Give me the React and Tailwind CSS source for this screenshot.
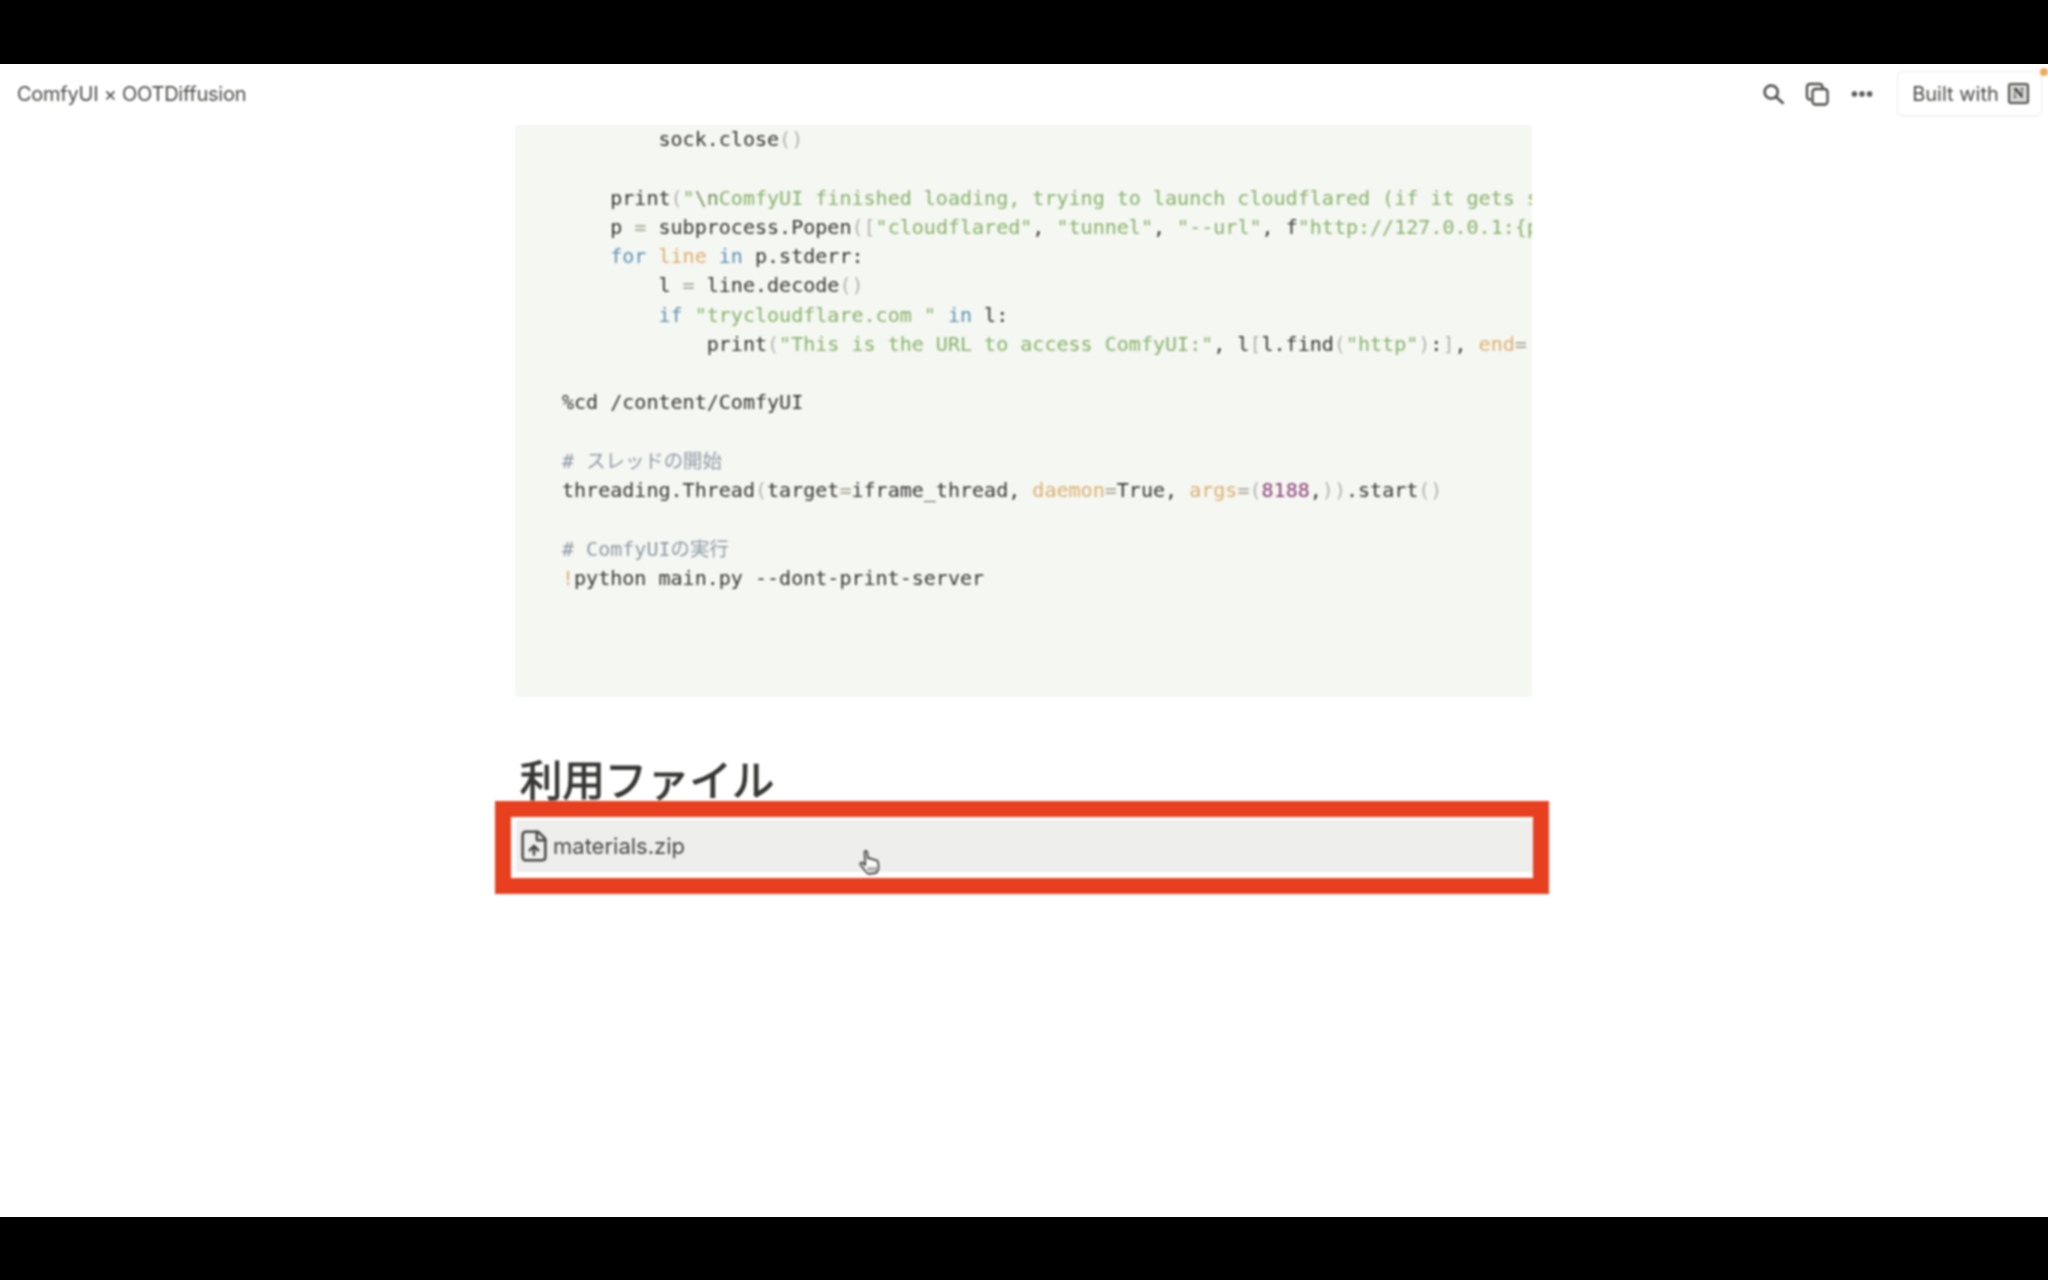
import React from "react";
import { MoreHorizontal, FileUp } from "lucide-react";

const T = ({ c, children }) => <span className={c}>{children}</span>;
const G = "text-[#86b36a]";
const B = "text-[#5c93b5]";
const O = "text-[#dcb06e]";
const P = "text-[#b4b4af]";
const E = "text-[#a8a596]";
const C = "text-[#8f99a5]";
const M = "text-[#8c3f78]";

const Line = ({ children }) => <div className="h-[29.25px] leading-[29.25px] whitespace-pre">{children || " "}</div>;

function Hand() {
  return (
    <svg width="24" height="28" viewBox="0 0 24 28" fill="none">
      <path
        d="M6.5 3.2c0-1.6 2.5-1.6 2.7 0l.8 6.3 1.2-.3c1-.2 1.8.2 2 1l1.3-.1c1-.1 1.6.4 1.8 1l1.3 0c1.5.2 2.4 1.3 2.6 2.8l.3 4.1c.2 2.8-1 4.6-2.5 6l-7.5 1c-1.6-.9-2.7-2.2-3.7-3.9l-4.3-5.4c-1-1.4.6-2.7 2-1.9l2.8 2.2z"
        fill="#fafafa"
        stroke="#4a4a4a"
        strokeWidth="1.8"
        strokeLinejoin="round"
      />
      <path d="M11 18v4M14 18v4M17 18v4" stroke="#4a4a4a" strokeWidth="1.2" />
    </svg>
  );
}

function SearchIcon() {
  return (
    <svg width="24" height="24" viewBox="0 0 24 24" fill="none" stroke="currentColor" strokeWidth="2.5" strokeLinecap="round" className="mr-[19px]">
      <circle cx="9.2" cy="10" r="6.6" />
      <path d="M14.2 15l6.6 6" />
    </svg>
  );
}

function CopyIcon() {
  return (
    <svg width="24" height="24" viewBox="0 0 24 24" fill="none" stroke="currentColor" strokeWidth="2.3" className="mr-[20px]">
      <path d="M6 17.5H5a3 3 0 0 1-3-3V5a3 3 0 0 1 3-3h9.5a3 3 0 0 1 3 3v1" />
      <rect x="7.5" y="7" width="15" height="15.5" rx="3" />
    </svg>
  );
}

function Notion() {
  return (
    <div className="w-[21px] h-[21px] rounded-[3px] border-[2.5px] border-[#4a4a48] bg-[#d8d8d6] flex items-center justify-center text-[15px] leading-none font-bold text-[#333331] font-['Liberation_Serif',serif]">
      N
    </div>
  );
}

export default function App() {
  return (
    <div className="w-[2048px] h-[1280px] flex flex-col overflow-hidden bg-white font-['Inter','Noto_Sans_CJK_JP',sans-serif]">
      <div className="h-[64px] bg-black shrink-0" />

      <header className="relative h-[61px] shrink-0 flex items-center justify-between pl-[17px] pr-[6px] pb-[2px] text-[#4a4a48] blur-[0.8px]">
        <div className="text-[20px] leading-none tracking-[-0.25px]">ComfyUI × OOTDiffusion</div>
        <div className="flex items-center">
          <SearchIcon />
          <CopyIcon />
          <MoreHorizontal size={26} strokeWidth={3} className="mr-[22px]" />
          <div className="h-[45px] w-[145px] flex items-center justify-center gap-[9px] pl-[2px] rounded-[6px] border border-[#ebebe9] text-[20px] shadow-[0_1px_2px_rgba(0,0,0,0.04)]">
            <span>Built with</span>
            <Notion />
          </div>
        </div>
        <div className="absolute right-0 top-[4px] w-[8px] h-[8px] rounded-full bg-[#eeaa55]" />
      </header>

      <main className="flex-1 overflow-hidden pl-[515px] blur-[0.8px]">
        <div className="w-[1017px] h-[572px] bg-[#f5f7f2] overflow-hidden rounded-[2px] pl-[47px] text-[20.04px] text-[#363635] font-['DejaVu_Sans_Mono','Noto_Sans_CJK_JP',monospace]">
          <Line>{"        sock.close"}<T c={P}>()</T></Line>
          <Line />
          <Line>{"    print"}<T c={P}>(</T><T c={G}>"</T><T c="text-[#6f8f5a]">\n</T><T c={G}>ComfyUI finished loading, trying to launch cloudflared (if it gets stuck here cloudflared is having issues)</T></Line>
          <Line>{"    p "}<T c={E}>=</T>{" subprocess.Popen"}<T c={P}>(</T><T c={P}>[</T><T c={G}>"cloudflared"</T>{", "}<T c={G}>"tunnel"</T>{", "}<T c={G}>"--url"</T>{", f"}<T c={G}>"http://127.0.0.1:{"{"}port{"}"}"</T></Line>
          <Line>{"    "}<T c={B}>for</T>{" "}<T c={O}>line</T>{" "}<T c={B}>in</T>{" p.stderr:"}</Line>
          <Line>{"        l "}<T c={E}>=</T>{" line.decode"}<T c={P}>()</T></Line>
          <Line>{"        "}<T c={B}>if</T>{" "}<T c={G}>"trycloudflare.com "</T>{" "}<T c={B}>in</T>{" l:"}</Line>
          <Line>{"            print"}<T c={P}>(</T><T c={G}>"This is the URL to access ComfyUI:"</T>{", l"}<T c={P}>[</T>{"l.find"}<T c={P}>(</T><T c={G}>"http"</T><T c={P}>)</T>{":"}<T c={P}>]</T>{", "}<T c={O}>end</T><T c={E}>=</T></Line>
          <Line />
          <Line>%cd /content/ComfyUI</Line>
          <Line />
          <Line><T c={C}># <span className="text-[19.4px]">スレッドの開始</span></T></Line>
          <Line>{"threading.Thread"}<T c={P}>(</T>{"target"}<T c={E}>=</T>{"iframe_thread, "}<T c={O}>daemon</T><T c={E}>=</T>{"True, "}<T c={O}>args</T><T c={E}>=</T><T c={P}>(</T><T c={M}>8188</T>{","}<T c={P}>))</T>{".start"}<T c={P}>()</T></Line>
          <Line />
          <Line><T c={C}># ComfyUI<span className="text-[19.4px]">の実行</span></T></Line>
          <Line><T c={O}>!</T>python main.py --dont-print-server</Line>
        </div>

        <h2 className="mt-[61px] ml-[5px] h-[46px] leading-[46px] text-[42.4px] font-normal [-webkit-text-stroke:1.1px_#363634] text-[#363634] whitespace-nowrap">利用ファイル</h2>

        <div className="relative -mt-[3px] -ml-[20px] w-[1054px] h-[93px] border-[16px] border-[#e8401f] bg-white pt-[3px] pb-[6px] pl-[5px]">
          <div className="h-[52px] bg-[#eeeeed] flex items-center pl-[1px] text-[#484846]">
            <FileUp size={34} strokeWidth={1.8} className="mr-[2px]" />
            <span className="text-[22px] leading-none">materials.zip</span>
          </div>
          <div className="absolute left-[347px] top-[32px]">
            <Hand />
          </div>
        </div>
      </main>

      <div className="h-[63px] bg-black shrink-0" />
    </div>
  );
}
